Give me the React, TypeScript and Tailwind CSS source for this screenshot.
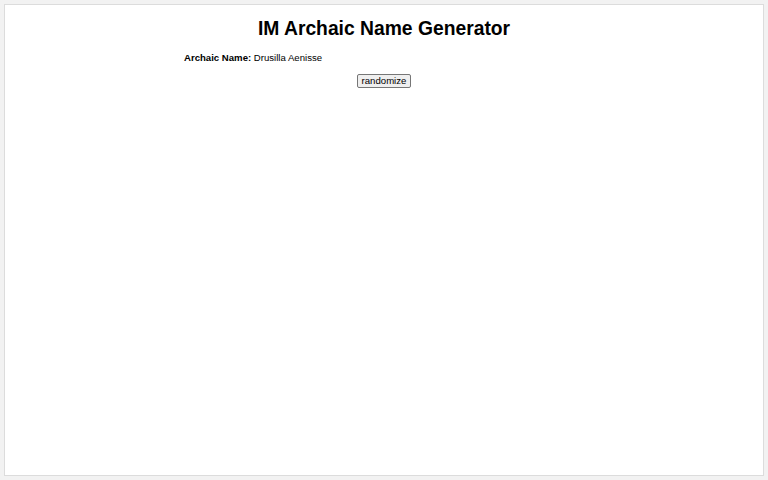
export default function App() {
  return (
    <div className="h-[480px] w-[768px] bg-[#f2f2f2] p-[4px] font-['Liberation_Sans',Arial,sans-serif] text-black">
      <div className="h-full w-full border border-[#dcdcdc] bg-white">
        <h1 className="mt-[12px] text-center text-[19.3px] font-bold leading-[24px]">
          IM Archaic Name Generator
        </h1>
        <div className="mx-auto mt-[11px] w-[400px] text-[9.6px] leading-[12px]">
          <p>
            <span className="font-bold">Archaic Name:</span> Drusilla Aenisse
          </p>
          <div className="mt-[10px] flex justify-center">
            <button
              type="button"
              className="h-[14px] rounded-[2px] border border-[#767676] bg-[#efefef] px-[4px] text-[9.6px] leading-[12px]"
            >
              randomize
            </button>
          </div>
        </div>
      </div>
    </div>
  );
}
